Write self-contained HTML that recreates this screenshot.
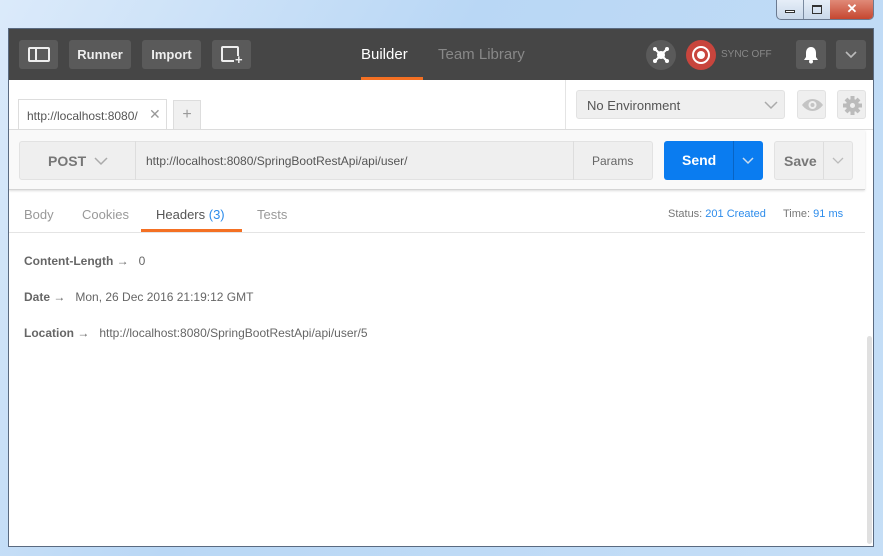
<!DOCTYPE html><html><head><style>
*{box-sizing:border-box;margin:0;padding:0}
body{width:883px;height:556px;overflow:hidden;background:linear-gradient(120deg,#dbeafa,#b9d7f5 40%,#c5def6);font-family:"Liberation Sans",sans-serif;position:relative}
.a{position:absolute}
.win{left:8px;top:28px;width:866px;height:519px;background:#fff;border:1px solid #5a6a80;overflow:hidden}
.hdr{left:0;top:0;width:866px;height:51px;background:#464646}
.btn{background:#5a5a5a;border-radius:3px;color:#eee;font-size:13px;font-weight:bold;text-align:center;line-height:29px;height:29px;top:11px}
.g{background:#efefef;border:1px solid #e2e2e2;border-radius:3px}
.t{font-size:13px;color:#888}
svg{position:absolute;left:0;top:0}
</style></head><body>
<div class="a" style="left:776px;top:0;width:98px;height:20px;border:1px solid #6b7a90;border-top:none;border-radius:0 0 5px 5px;background:linear-gradient(#e6eef8,#c9d8ea);overflow:hidden">
<div class="a" style="left:8px;top:10px;width:10px;height:3px;border:1px solid #333;background:#fff"></div>
<div class="a" style="left:26px;top:0;width:1px;height:20px;background:#7a8aa0"></div>
<div class="a" style="left:35px;top:5px;width:10px;height:9px;border:1px solid #333;border-top-width:2px"></div>
<div class="a" style="left:53px;top:0;width:44px;height:20px;background:linear-gradient(#e08a78,#c4432c);color:#fff;text-align:center;font-weight:bold;font-size:13px;line-height:18px">✕</div>
</div>
<div class="a win">
<div class="a hdr">
<div class="a btn" style="left:10px;width:39px"><div class="a" style="left:9px;top:7px;width:22px;height:15px;border:2px solid #eee;border-radius:2px"></div><div class="a" style="left:16px;top:7px;width:2px;height:15px;background:#eee"></div></div>
<div class="a btn" style="left:60px;width:62px">Runner</div>
<div class="a btn" style="left:133px;width:59px">Import</div>
<div class="a btn" style="left:203px;width:39px"><div class="a" style="left:9px;top:6px;width:18px;height:16px;border:2px solid #eee;border-radius:2px"></div><div class="a" style="left:22px;top:16px;width:10px;height:8px;background:#5a5a5a"></div><div class="a" style="left:23px;top:14px;font-size:13px;line-height:11px">+</div></div>
<div class="a" style="left:352px;top:17px;color:#fff;font-size:15px">Builder</div>
<div class="a" style="left:352px;top:48px;width:62px;height:3px;background:#f47023"></div>
<div class="a" style="left:429px;top:17px;color:#888;font-size:15px">Team Library</div>
<div class="a" style="left:637px;top:11px;width:30px;height:30px;border-radius:50%;background:#5a5a5a"><svg width="30" height="30"><g stroke="#fff" stroke-width="2.2" stroke-linecap="round"><path d="M10 10l10 10M20 10l-10 10"/></g><circle cx="15" cy="15" r="4" fill="#fff"/><circle cx="9" cy="9" r="2" fill="#fff"/><circle cx="21" cy="21" r="2" fill="#fff"/><circle cx="21" cy="9" r="2" fill="#fff"/><circle cx="9" cy="21" r="2" fill="#fff"/></svg></div>
<div class="a" style="left:677px;top:11px;width:30px;height:30px;border-radius:50%;background:#c8453d"><div class="a" style="left:6px;top:6px;width:18px;height:18px;border:2px solid #fff;border-radius:50%"></div><div class="a" style="left:11px;top:11px;width:8px;height:8px;background:#fff;border-radius:50%"></div></div>
<div class="a" style="left:712px;top:20px;color:#888;font-size:10px">SYNC OFF</div>
<div class="a btn" style="left:787px;width:30px"><svg width="30" height="29"><path d="M15 7c-3.5 0-5 3-5 6v4l-2 3h14l-2-3v-4c0-3-1.5-6-5-6z" fill="#fff"/><circle cx="15" cy="21.5" r="2" fill="#fff"/></svg></div>
<div class="a btn" style="left:827px;width:30px"><svg width="30" height="29"><path d="M10 12l5 5 5-5" stroke="#bbb" stroke-width="1.6" fill="none"/></svg></div>
</div>
<div class="a" style="left:9px;top:70px;width:149px;height:32px;border:1px solid #ddd;border-bottom:none;background:#fff"><span class="a" style="left:8px;top:9px;font-size:12px;color:#555">http://localhost:8080/</span><span class="a" style="left:130px;top:6px;color:#999;font-size:14px">✕</span></div>
<div class="a" style="left:164px;top:71px;width:28px;height:30px;background:#f0f0f0;border:1px solid #ddd;border-bottom:none;text-align:center;color:#999;line-height:28px">+</div>
<div class="a" style="left:556px;top:51px;width:1px;height:49px;background:#e4e4e4"></div>
<div class="a" style="left:0;top:100px;width:866px;height:1px;background:#ddd"></div>
<div class="a g" style="left:567px;top:61px;width:209px;height:29px"><span class="a t" style="left:10px;top:7px;color:#555">No Environment</span><svg style="left:187px;top:10px" width="14" height="9"><path d="M1 1l6 6 6-6" stroke="#aaa" stroke-width="1.5" fill="none"/></svg></div>
<div class="a g" style="left:788px;top:61px;width:29px;height:29px"><svg width="29" height="29"><path d="M4 14c6-8 15-8 21 0c-6 8-15 8-21 0z" fill="#c4c4c4"/><circle cx="14.5" cy="14" r="4" fill="#efefef"/><circle cx="14.5" cy="14" r="2" fill="#c4c4c4"/></svg></div>
<div class="a g" style="left:828px;top:61px;width:29px;height:29px"><svg width="29" height="29"><g stroke="#bbb" stroke-width="4"><path d="M14.5 5v19M5 14.5h19M8 8l13 13M21 8L8 21"/></g><circle cx="14.5" cy="14.5" r="6.5" fill="#bbb"/><circle cx="14.5" cy="14.5" r="2.5" fill="#efefef"/></svg></div>
<div class="a" style="left:0;top:101px;width:856px;height:60px;background:#f9f9f9;border-bottom:1px solid #d4d4d4;box-shadow:0 1px 2px #ddd"></div>
<div class="a g" style="left:10px;top:112px;width:634px;height:39px"></div>
<div class="a" style="left:126px;top:112px;width:1px;height:39px;background:#ddd"></div>
<div class="a" style="left:564px;top:112px;width:1px;height:39px;background:#ddd"></div>
<div class="a" style="left:39px;top:124px;color:#777;font-size:14px;font-weight:bold">POST</div>
<svg style="left:85px;top:128px" width="14" height="9"><path d="M1 1l6 6 6-6" stroke="#aaa" stroke-width="1.5" fill="none"/></svg>
<div class="a" style="left:137px;top:125px;font-size:12px;color:#555">http://localhost:8080/SpringBootRestApi/api/user/</div>
<div class="a" style="left:583px;top:125px;font-size:12px;color:#666">Params</div>
<div class="a" style="left:655px;top:112px;width:99px;height:39px;background:#0a7cf0;border-radius:3px"><span class="a" style="left:18px;top:11px;color:#fff;font-weight:bold;font-size:14px">Send</span><div class="a" style="left:69px;top:0;width:1px;height:39px;background:#0864c4"></div><svg style="left:78px;top:16px" width="12" height="8"><path d="M1 1l5 5 5-5" stroke="#cde" stroke-width="1.5" fill="none"/></svg></div>
<div class="a g" style="left:765px;top:112px;width:79px;height:39px"><span class="a" style="left:9px;top:11px;color:#777;font-weight:bold;font-size:14px">Save</span><div class="a" style="left:48px;top:0;width:1px;height:37px;background:#ddd"></div><svg style="left:57px;top:15px" width="12" height="8"><path d="M1 1l5 5 5-5" stroke="#bbb" stroke-width="1.3" fill="none"/></svg></div>
<div class="a" style="left:0;top:203px;width:856px;height:1px;background:#e4e4e4"></div>
<div class="a t" style="left:15px;top:178px;color:#999">Body</div>
<div class="a t" style="left:73px;top:178px;color:#999">Cookies</div>
<div class="a t" style="left:147px;top:178px;color:#555">Headers <span style="color:#2d8ceb">(3)</span></div>
<div class="a" style="left:132px;top:200px;width:101px;height:3px;background:#f47023"></div>
<div class="a t" style="left:248px;top:178px;color:#999">Tests</div>
<div class="a" style="left:659px;top:179px;font-size:11px;color:#777">Status: <span style="color:#2d8ceb">201 Created</span></div>
<div class="a" style="left:774px;top:179px;font-size:11px;color:#777">Time: <span style="color:#2d8ceb">91 ms</span></div>
<div class="a" style="left:15px;top:225px;font-size:12px;color:#666"><b>Content-Length</b> →&nbsp;&nbsp; 0</div>
<div class="a" style="left:15px;top:261px;font-size:12px;color:#666"><b>Date</b> →&nbsp;&nbsp; Mon, 26 Dec 2016 21:19:12 GMT</div>
<div class="a" style="left:15px;top:297px;font-size:12px;color:#666"><b>Location</b> →&nbsp;&nbsp; http://localhost:8080/SpringBootRestApi/api/user/5</div>
<div class="a" style="left:858px;top:307px;width:5px;height:208px;background:#e0e0e0;border-radius:3px"></div>
</div>
</body></html>
